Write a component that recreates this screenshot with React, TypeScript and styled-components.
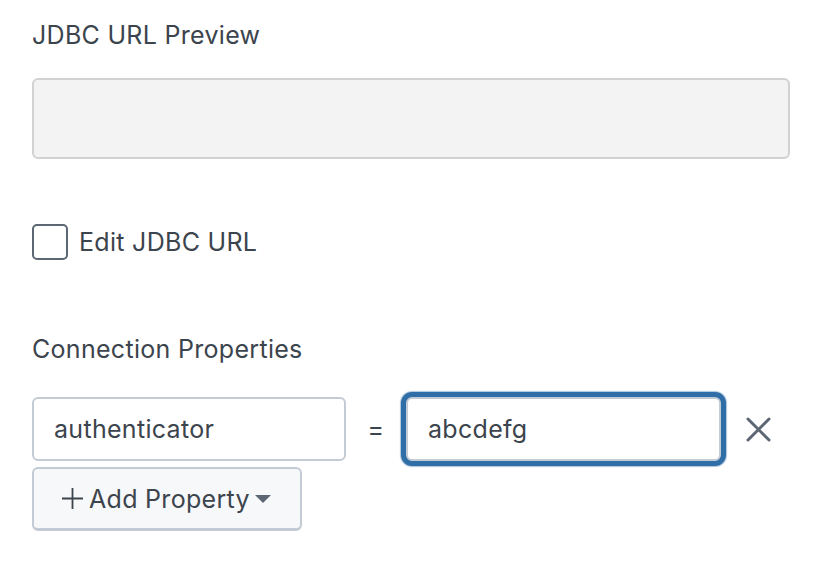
import React from 'react'
import styled, { createGlobalStyle } from 'styled-components'

const GlobalStyle = createGlobalStyle`
  html, body {
    margin: 0;
    padding: 0;
    background: #ffffff;
  }
  body {
    font-family: Inter, "Liberation Sans", sans-serif;
    font-size: 25px;
    letter-spacing: 0.3px;
    color: #3c444d;
  }
`

const Page = styled.div`
  display: flex;
  flex-direction: column;
  padding: 20px 32px 0 32px;
  width: 822px;
  box-sizing: border-box;
`

const Label = styled.div<{ $gap: number }>`
  line-height: 30px;
  color: #3c444d;
  margin-bottom: ${(p) => p.$gap}px;
`

const Preview = styled.div`
  height: 81px;
  box-sizing: border-box;
  background: #f3f3f3;
  border: 2px solid #d2d2d2;
  border-radius: 6px;
  margin-bottom: 65px;
`

const CheckRow = styled.label`
  display: flex;
  align-items: center;
  gap: 11px;
  color: #3c444d;
  margin-bottom: 74px;
`

const CheckBox = styled.span`
  width: 36px;
  height: 36px;
  box-sizing: border-box;
  border: 2px solid #5c6773;
  border-radius: 5px;
  background: #fff;
`

const PropRow = styled.div`
  display: flex;
  align-items: center;
`

const TextInput = styled.div<{ $focused?: boolean }>`
  width: ${(p) => (p.$focused ? 315 : 314)}px;
  height: 64px;
  box-sizing: border-box;
  display: flex;
  align-items: center;
  padding-left: 20px;
  color: #3c444d;
  background: #fff;
  border: 2px solid #c3cbd4;
  border-radius: 6px;
  box-shadow: ${(p) => (p.$focused ? '0 0 0 5px #2f6ea7, 0 0 1px 6px rgba(47,110,167,0.4)' : 'none')};
`

const Equals = styled.div`
  width: 60px;
  text-align: center;
  color: #3c444d;
`

const RemoveButton = styled.button`
  margin-left: 25px;
  width: 25px;
  height: 25px;
  padding: 0;
  border: none;
  background: none;
  display: flex;
  align-items: center;
  justify-content: center;
`

const AddButton = styled.button`
  margin-top: 6px;
  align-self: flex-start;
  width: 270px;
  height: 64px;
  box-sizing: border-box;
  display: flex;
  align-items: center;
  padding: 0 0 0 28px;
  font: inherit;
  letter-spacing: inherit;
  color: #3c444d;
  background: #f7f8fa;
  border: 2px solid #c3cbd4;
  border-bottom-width: 3px;
  border-radius: 6px;
`

const Caret = styled.span`
  margin-left: 5px;
  width: 0;
  height: 0;
  border-left: 8.5px solid transparent;
  border-right: 8.5px solid transparent;
  border-top: 8px solid #5c6773;
`

function App() {
  return (
    <>
      <GlobalStyle />
      <Page>
        <Label $gap={28}>JDBC URL Preview</Label>
        <Preview />
        <CheckRow>
          <CheckBox />
          Edit JDBC URL
        </CheckRow>
        <Label $gap={33}>Connection Properties</Label>
        <PropRow>
          <TextInput>authenticator</TextInput>
          <Equals>=</Equals>
          <TextInput $focused>abcdefg</TextInput>
          <RemoveButton aria-label="Remove">
            <svg width="25" height="25" viewBox="0 0 25 25">
              <path d="M2 2 L23 23 M23 2 L2 23" stroke="#5c6773" strokeWidth="3" strokeLinecap="round" />
            </svg>
          </RemoveButton>
        </PropRow>
        <AddButton>
          <svg width="21" height="21" viewBox="0 0 21 21" style={{ marginRight: 6 }}>
            <path d="M10.5 0 V21 M0 10.5 H21" stroke="#3c444d" strokeWidth="1.8" />
          </svg>
          Add Property
          <Caret />
        </AddButton>
      </Page>
    </>
  )
}

export default App
